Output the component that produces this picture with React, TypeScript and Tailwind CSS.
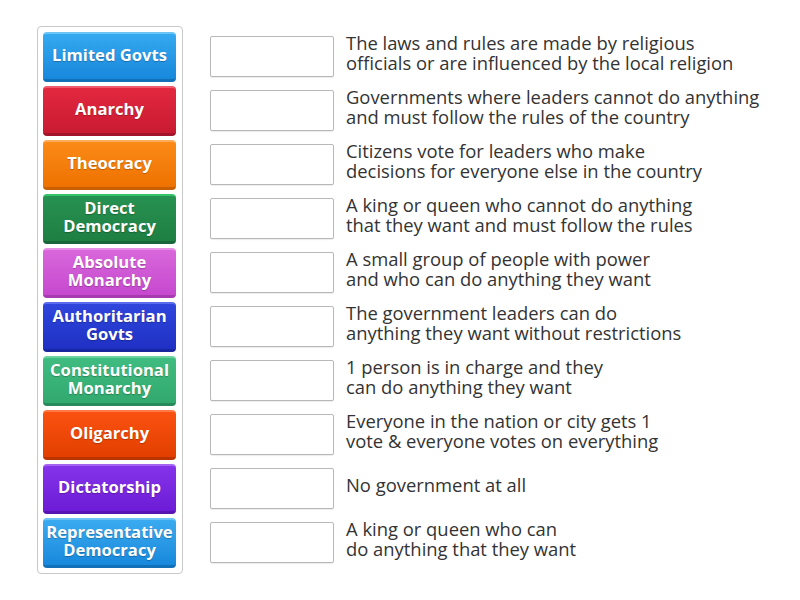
import React from "react";

const items: { label: string[]; cls: string }[] = [
  { label: ["Limited Govts"], cls: "bg-gradient-to-b from-[#35a9f0] to-[#1788dc] border-t-[#6cc3f5] border-b-[#1270b8]" },
  { label: ["Anarchy"], cls: "bg-gradient-to-b from-[#e2283f] to-[#c91a32] border-t-[#ee5a6c] border-b-[#a3142a]" },
  { label: ["Theocracy"], cls: "bg-gradient-to-b from-[#fb8a16] to-[#ee7200] border-t-[#fdac5a] border-b-[#c85f00]" },
  { label: ["Direct", "Democracy"], cls: "bg-gradient-to-b from-[#279252] to-[#1e7f42] border-t-[#35c46b] border-b-[#17663a]" },
  { label: ["Absolute", "Monarchy"], cls: "bg-gradient-to-b from-[#d867da] to-[#c648cf] border-t-[#e58fe6] border-b-[#a83aaf]" },
  { label: ["Authoritarian", "Govts"], cls: "bg-gradient-to-b from-[#2f45dc] to-[#1f31c4] border-t-[#5a6cec] border-b-[#1826a0]" },
  { label: ["Constitutional", "Monarchy"], cls: "bg-gradient-to-b from-[#40bc80] to-[#32a96e] border-t-[#6cd3a0] border-b-[#278a5a]" },
  { label: ["Oligarchy"], cls: "bg-gradient-to-b from-[#fa5110] to-[#e23f00] border-t-[#ff7a44] border-b-[#bb3400]" },
  { label: ["Dictatorship"], cls: "bg-gradient-to-b from-[#8533ea] to-[#6d1bd6] border-t-[#a565f2] border-b-[#5614b0]" },
  { label: ["Representative", "Democracy"], cls: "bg-gradient-to-b from-[#3aabf0] to-[#1788dc] border-t-[#6cc3f5] border-b-[#1270b8]" },
];

const answers: string[][] = [
  ["The laws and rules are made by religious", "officials or are influenced by the local religion"],
  ["Governments where leaders cannot do anything", "and must follow the rules of the country"],
  ["Citizens vote for leaders who make", "decisions for everyone else in the country"],
  ["A king or queen who cannot do anything", "that they want and must follow the rules"],
  ["A small group of people with power", "and who can do anything they want"],
  ["The government leaders can do", "anything they want without restrictions"],
  ["1 person is in charge and they", "can do anything they want"],
  ["Everyone in the nation or city gets 1", "vote & everyone votes on everything"],
  ["No government at all"],
  ["A king or queen who can", "do anything that they want"],
];

export default function App() {
  return (
    <div
      className="w-[800px] h-[600px] bg-white flex items-start pt-[26px] pl-[37px]"
      style={{ fontFamily: '"Open Sans", "Noto Sans", sans-serif' }}
    >
      <div className="w-[146px] border border-[#c8c8c8] rounded-[4px] pl-[5px] pr-[6px] py-[5px] flex flex-col gap-[4px]">
        {items.map((it, i) => (
          <div
            key={i}
            className={`h-[50px] rounded-[4px] border-t-2 border-b-[3px] pb-[3px] flex flex-col items-center justify-center text-white font-bold text-[16.6px] leading-[18px] [text-shadow:0_1px_1px_rgba(0,0,0,0.25)] ${it.cls}`}
          >
            {it.label.map((l, j) => (
              <span key={j} className="whitespace-nowrap">{l}</span>
            ))}
          </div>
        ))}
      </div>
      <div className="ml-[27px] pt-[6px] flex flex-col gap-[4px]">
        {answers.map((a, i) => (
          <div key={i} className="h-[50px] flex items-center">
            <div className="w-[124px] h-[41px] border border-[#b8b8b8] rounded-[2px] bg-white shadow-[0_1px_1px_rgba(0,0,0,0.08)] shrink-0 -mt-[1px]" />
            <div className="ml-[12px] text-[#333333] text-[18.4px] leading-[20px] -mt-[8px]">
              {a.map((l, j) => (
                <div key={j} className="whitespace-nowrap">{l}</div>
              ))}
            </div>
          </div>
        ))}
      </div>
    </div>
  );
}
